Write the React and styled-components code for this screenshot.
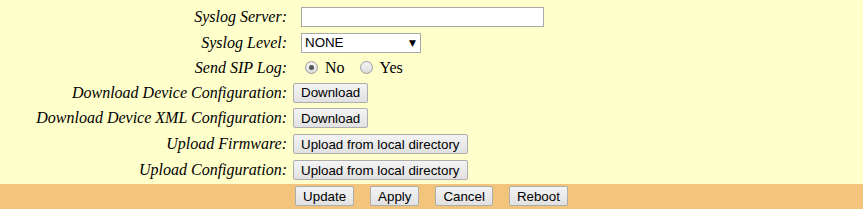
import React from "react"
import styled, { createGlobalStyle } from "styled-components"

const GlobalStyle = createGlobalStyle`
    html, body {
        margin: 0;
        padding: 0;
        background: #FFFFCC;
    }
`

const rows = [
    { label: "Syslog Server:", kind: "text" },
    { label: "Syslog Level:", kind: "select" },
    { label: "Send SIP Log:", kind: "radio" },
    { label: "Download Device Configuration:", kind: "button", text: "Download" },
    { label: "Download Device XML Configuration:", kind: "button", text: "Download" },
    { label: "Upload Firmware:", kind: "button", text: "Upload from local directory" },
    { label: "Upload Configuration:", kind: "button", text: "Upload from local directory" },
]

function Control({ row }) {
    if (row.kind === "text") return <TextInput type="text" defaultValue="" />
    if (row.kind === "select") {
        return (
            <SelectWrap>
                <Select defaultValue="NONE">
                    <option>NONE</option>
                    <option>LOW</option>
                    <option>HIGH</option>
                </Select>
                <Arrow>▼</Arrow>
            </SelectWrap>
        )
    }
    if (row.kind === "radio") {
        return (
            <RadioGroup>
                <RadioLabel><Radio checked /> No</RadioLabel>
                <RadioLabel><Radio /> Yes</RadioLabel>
            </RadioGroup>
        )
    }
    return <Button>{row.text}</Button>
}

export default function App() {
    return (
        <Page>
            <GlobalStyle />
            <Form>
                {rows.map((row) => (
                    <React.Fragment key={row.label}>
                        <Label>{row.label}</Label>
                        <Cell>
                            <Control row={row} />
                        </Cell>
                    </React.Fragment>
                ))}
            </Form>
            <Footer>
                <Button>Update</Button>
                <Button>Apply</Button>
                <Button>Cancel</Button>
                <Button>Reboot</Button>
            </Footer>
        </Page>
    )
}

const Page = styled.div`
    width: 863px;
    height: 209px;
    background: #FFFFCC;
    display: flex;
    flex-direction: column;
`

const Form = styled.div`
    display: grid;
    grid-template-columns: 287px 1fr;
    grid-template-rows: 26px 25px 25px 25px 26px 26px 26px;
    column-gap: 6px;
    padding: 4px 0 1px 0;
`

const Label = styled.div`
    font-family: "Liberation Serif", "Times New Roman", serif;
    font-style: italic;
    font-size: 16px;
    color: #000;
    text-align: right;
    display: flex;
    align-items: center;
    justify-content: flex-end;
    white-space: nowrap;
`

const Cell = styled.div`
    display: flex;
    align-items: center;
`

const TextInput = styled.input`
    box-sizing: border-box;
    margin-left: 8px;
    width: 243px;
    height: 20px;
    border: 1px solid #A9A9A9;
    background: #fff;
    padding: 0 3px;
    font-family: "Liberation Sans", Arial, sans-serif;
    font-size: 13px;
    outline: none;
`

const SelectWrap = styled.div`
    position: relative;
    margin-left: 8px;
    width: 120px;
    height: 20px;
`

const Select = styled.select`
    appearance: none;
    box-sizing: border-box;
    width: 120px;
    height: 20px;
    border: 1px solid #A9A9A9;
    border-radius: 0;
    background: #fff;
    padding: 0 0 0 3px;
    font-family: "Liberation Sans", Arial, sans-serif;
    font-size: 13.33px;
    color: #000;
    outline: none;
`

const Arrow = styled.span`
    position: absolute;
    right: 5px;
    top: 4px;
    font-family: "DejaVu Sans", sans-serif;
    font-size: 9px;
    line-height: 12px;
    color: #000;
    pointer-events: none;
`

const RadioGroup = styled.div`
    display: flex;
    align-items: center;
    gap: 15px;
    margin-left: 12px;
`

const RadioLabel = styled.label`
    display: flex;
    align-items: center;
    gap: 7px;
    font-family: "Liberation Serif", "Times New Roman", serif;
    font-size: 16px;
    color: #000;
`

const Radio = styled.span`
    box-sizing: border-box;
    width: 13px;
    height: 13px;
    border-radius: 50%;
    border: 1px solid #9a9a9a;
    background: linear-gradient(#f4f4f4, #dcdcdc);
    display: flex;
    align-items: center;
    justify-content: center;

    &::after {
        content: "";
        width: 5px;
        height: 5px;
        border-radius: 50%;
        background: ${(p) => (p.checked ? "#555" : "transparent")};
    }
`

const Button = styled.button`
    box-sizing: border-box;
    height: 20px;
    padding: 0 7px;
    border: 1px solid #ADADAD;
    border-radius: 2px;
    background: linear-gradient(#f4f4f4, #e1e1e1);
    font-family: "Liberation Sans", Arial, sans-serif;
    font-size: 13.33px;
    color: #000;
    cursor: pointer;
`

const Footer = styled.div`
    flex: 1;
    background: #F2C47C;
    display: flex;
    justify-content: center;
    align-items: center;
    gap: 16px;
    padding-bottom: 1px;
`
